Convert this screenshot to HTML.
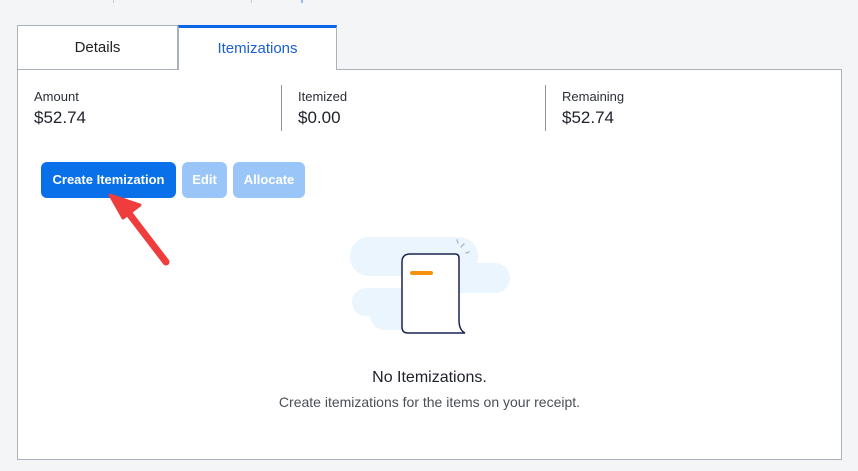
<!DOCTYPE html>
<html><head><style>
body{margin:0;width:858px;height:471px;background:#f4f5f7;font-family:"Liberation Sans",sans-serif;position:relative;overflow:hidden}
.tab{position:absolute;top:25px;height:44px;box-sizing:border-box;border:1px solid #aab1bb;border-bottom:none;background:#fff;text-align:center;line-height:44px;font-size:15px}
.panel{position:absolute;left:17px;top:69px;width:825px;height:391px;box-sizing:border-box;border:1px solid #aab1bb;background:#fff}
.lbl{position:absolute;font-size:13px;color:#2b2f36}
.val{position:absolute;font-size:17px;color:#1e2228}
.sep{position:absolute;width:1px;height:46px;background:#8d949e;top:85px}
.btn{position:absolute;top:162px;height:36px;border-radius:6px;color:#fff;font-weight:bold;font-size:13px;line-height:36px;text-align:center}
</style></head><body>
<div style="position:absolute;left:113px;top:0;width:1px;height:3px;background:#ccc"></div>
<div style="position:absolute;left:251px;top:0;width:1px;height:3px;background:#ccc"></div>
<div style="position:absolute;left:301px;top:0;width:2px;height:3px;background:#9bb8f0"></div>
<div class="panel"></div>
<div class="tab" style="left:17px;width:161px;color:#222">Details</div>
<div class="tab" style="left:178px;width:159px;color:#1a5fd6;border-top:3px solid #0a66e4;height:45px;line-height:41px">Itemizations</div>
<div class="lbl" style="left:34px;top:89px">Amount</div>
<div class="val" style="left:34px;top:108px">$52.74</div>
<div class="sep" style="left:281px"></div>
<div class="lbl" style="left:298px;top:89px">Itemized</div>
<div class="val" style="left:298px;top:108px">$0.00</div>
<div class="sep" style="left:545px"></div>
<div class="lbl" style="left:562px;top:89px">Remaining</div>
<div class="val" style="left:562px;top:108px">$52.74</div>
<div class="btn" style="left:41px;width:135px;background:#0a70ea">Create Itemization</div>
<div class="btn" style="left:182px;width:45px;background:#9ac5f8">Edit</div>
<div class="btn" style="left:233px;width:72px;background:#9ac5f8">Allocate</div>
<svg style="position:absolute;left:0;top:0" width="858" height="471">
<g fill="#eaf5fd">
<rect x="350" y="237" width="128" height="39" rx="19"/>
<rect x="420" y="263" width="90" height="30" rx="15"/>
<rect x="352" y="288" width="100" height="28" rx="14"/>
<rect x="370" y="300" width="90" height="30" rx="15"/>
</g>
<path d="M404 331 L462 331" stroke="#dde3ea" stroke-width="3"/>
<path d="M410 254 H455 Q459 254 459 258 V320 Q459 330 465 333 H408 Q402 333 402 327 V262 Q402 254 410 254 Z" fill="#fff" stroke="#1b2450" stroke-width="1.5"/>
<path d="M412 273 H431" stroke="#f7920f" stroke-width="4" stroke-linecap="round"/>
<g stroke="#b8bcc2" stroke-width="1.5" stroke-linecap="round">
<path d="M457 240 L458 243"/><path d="M461 247 L464 244"/><path d="M466 253 L469 252"/>
</g>
<path d="M166 262 L124 207" stroke="#ef3c3c" stroke-width="7" stroke-linecap="round"/>
<path d="M110 195 L140 205 L123 218 Z" fill="#ef3c3c" stroke="#ef3c3c" stroke-width="3" stroke-linejoin="round"/>
</svg>
<div style="position:absolute;left:17px;width:825px;top:369px;text-align:center;font-size:16px;color:#1e2228">No Itemizations.</div>
<div style="position:absolute;left:17px;width:825px;top:394px;text-align:center;font-size:14px;color:#4a4f57">Create itemizations for the items on your receipt.</div>
</body></html>
